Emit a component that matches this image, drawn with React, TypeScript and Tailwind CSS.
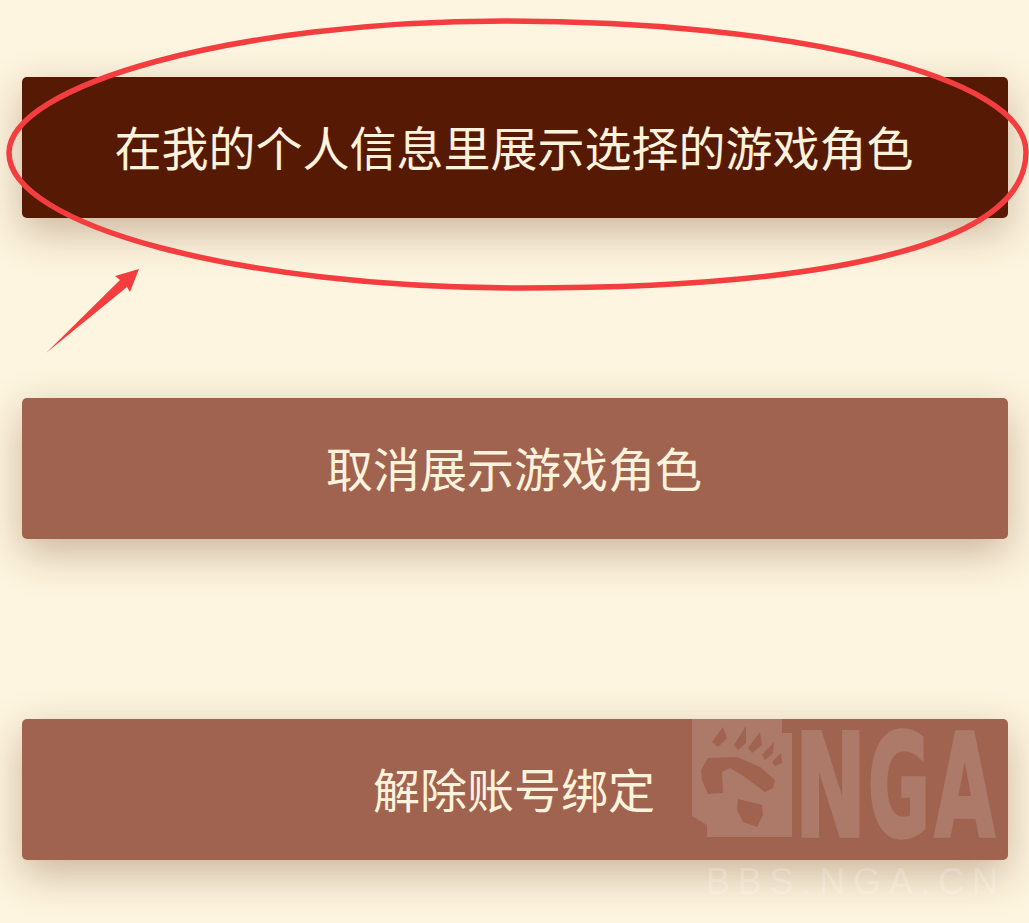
export default function App() {
  const btn = "flex h-[141px] items-center justify-center rounded-[5px] pb-[5px] pr-[2px] text-[47px] leading-none text-[#fdf2dc] shadow-[0_14px_42px_rgba(90,30,0,0.3)]";
  return (
    <div className="relative h-[923px] w-[1029px] overflow-hidden bg-[#fdf5df] font-['Noto_Sans_CJK_SC',sans-serif]">
      <div className="flex flex-col gap-[180px] pl-[22px] pr-[21px] pt-[77px]">
        <div className={`${btn} bg-[#561903]`}>在我的个人信息里展示选择的游戏角色</div>
        <div className={`${btn} bg-[#a06350]`}>取消展示游戏角色</div>
        <div className={`${btn} bg-[#a06350]`}>解除账号绑定</div>
      </div>
      <svg className="absolute left-0 top-0" width="1029" height="923" viewBox="0 0 1029 923">
        <path
          d="M9 153C9 85 235 21 505 21C790 21 1026 75 1026 152C1026 250 810 288 520 288C240 288 9 225 9 153Z"
          fill="none"
          stroke="#f43d3f"
          strokeWidth="5.5"
        />
        <polygon points="46,353 120,280 115,276 139,269 130,292 127,287" fill="#f43d3f" />
        <path
          fill="#ffffff"
          fillOpacity="0.14"
          fillRule="evenodd"
          d="M692 719H782V733H792V837H707V825L692 816Z
            M723 727L727 738L718 747L712 742Z
            M746 726L746 743L738 750L734 745Z
            M760 732L762 745L752 753L748 748Z
            M774 742L773 753L765 760L762 755Z
            M781 753L782 763L775 766L772 762Z
            M701 770L708 758L737 757L760 767L775 780L773 788L765 792L742 775L730 768L722 772L723 793L708 794L702 780Z
            M738 799L762 805L763 815L757 827L743 822L737 810Z"
        />
        <g opacity="0.14" fill="#ffffff" stroke="#ffffff" strokeWidth="2.5" fontFamily="'DejaVu Sans'" fontWeight="700" fontSize="100">
          <text transform="translate(795 835.5) scale(0.85 1.427)">N</text>
          <text transform="translate(867.7 835.5) scale(0.76 1.427)">G</text>
          <text transform="translate(934.5 835.5) scale(0.78 1.427)">A</text>
        </g>
        <text x="706" y="894" textLength="292" fontFamily="'Liberation Sans'" fontSize="36" fill="#ffffff" fillOpacity="0.2">BBS.NGA.CN</text>
      </svg>
    </div>
  );
}
